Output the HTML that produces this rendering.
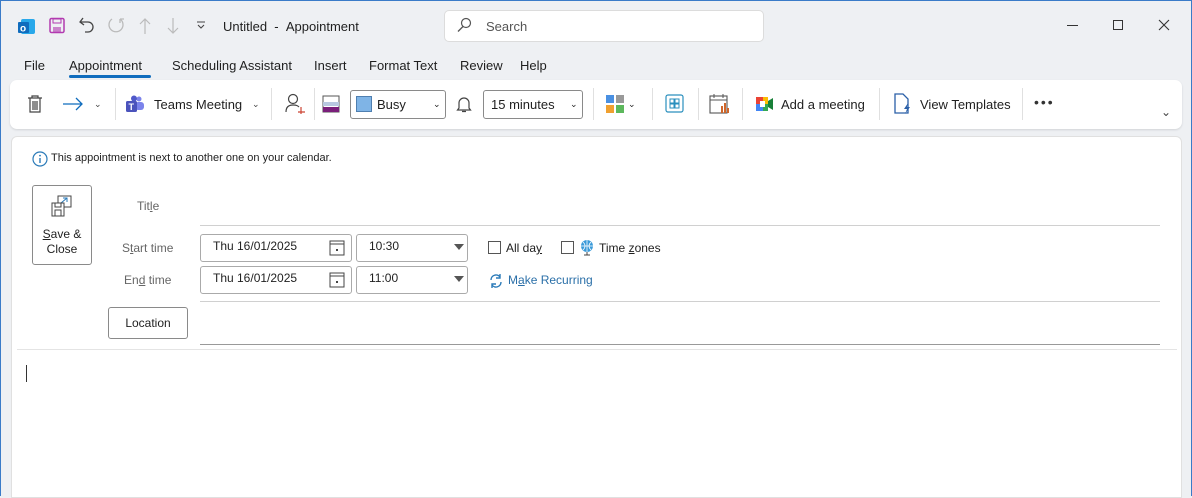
<!DOCTYPE html>
<html><head><style>
*{margin:0;padding:0;box-sizing:border-box}
body{width:1192px;height:496px;background:#eef0f3;font-family:"Liberation Sans",sans-serif;position:relative;overflow:hidden;color:#1f1f1f;border:1px solid #3a7bc8;border-bottom:none}
.a{position:absolute;white-space:nowrap}
.t13{font-size:13px}
.sep{position:absolute;width:1px;height:32px;background:#e0e0e0;top:87px}
.box{position:absolute;border:1px solid #8a8a8a;border-radius:3px;background:#fff;font-size:13px}
.lbl{position:absolute;font-size:12px;color:#666}
.hl{position:absolute;height:1px;background:#d0d0d0}
</style></head><body>
<!-- title bar -->
<svg class="a" style="left:16px;top:16px" width="20" height="20"><rect x="4" y="2" width="14" height="15" rx="2" fill="#28a8ea"/><rect x="1" y="5" width="11" height="11" rx="1" fill="#0f6cbd"/><text x="3" y="14.5" font-size="10" fill="#fff" font-family="Liberation Sans" font-weight="bold">o</text></svg>
<svg class="a" style="left:47px;top:16px" width="20" height="18"><rect x="2" y="1.5" width="14" height="14" rx="1.5" fill="none" stroke="#b23ab0" stroke-width="1.5"/><rect x="5" y="2" width="8" height="4" fill="none" stroke="#b23ab0"/><rect x="5" y="10" width="8" height="5" fill="#b23ab0" opacity=".6"/></svg>
<svg class="a" style="left:77px;top:15px" width="18" height="20"><path d="M5 2L2 6l4 3M2 6h8a5 5 0 010 10H7" fill="none" stroke="#444" stroke-width="1.3"/></svg>
<svg class="a" style="left:106px;top:15px" width="18" height="20"><path d="M13 3a7 7 0 11-8 0M13 3v4M13 3h4" fill="none" stroke="#bbb" stroke-width="1.3"/></svg>
<svg class="a" style="left:137px;top:15px" width="14" height="20"><path d="M7 18V3M2 8l5-5 5 5" fill="none" stroke="#bbb" stroke-width="1.2"/></svg>
<svg class="a" style="left:165px;top:15px" width="14" height="20"><path d="M7 2v15M2 12l5 5 5-5" fill="none" stroke="#bbb" stroke-width="1.2"/></svg>
<svg class="a" style="left:195px;top:19px" width="10" height="10"><path d="M1 2h8M2 5l3 3 3-3" fill="none" stroke="#444" stroke-width="1.1"/></svg>
<div class="a t13" style="left:222px;top:18px">Untitled&nbsp; - &nbsp;Appointment</div>
<div class="a" style="left:443px;top:9px;width:320px;height:32px;background:#fff;border:1px solid #dcdcdc;border-radius:5px"></div>
<svg class="a" style="left:455px;top:16px" width="16" height="16"><circle cx="10" cy="6" r="4.5" fill="none" stroke="#555" stroke-width="1.2"/><line x1="7" y1="9.5" x2="2" y2="14.5" stroke="#555" stroke-width="1.3"/></svg>
<div class="a t13" style="left:485px;top:18px;color:#555">Search</div>
<div class="a" style="left:1066px;top:24px;width:11px;height:1px;background:#333"></div>
<div class="a" style="left:1112px;top:19px;width:10px;height:10px;border:1px solid #333"></div>
<svg class="a" style="left:1157px;top:18px" width="12" height="12"><path d="M1 1l10 10M11 1L1 11" stroke="#333" stroke-width="1.1"/></svg>
<!-- tabs -->
<div class="a t13" style="left:23px;top:57px">File</div>
<div class="a t13" style="left:68px;top:57px">Appointment</div>
<div class="a" style="left:68px;top:74px;width:82px;height:3px;background:#0f6cbd;border-radius:2px"></div>
<div class="a t13" style="left:171px;top:57px">Scheduling Assistant</div>
<div class="a t13" style="left:313px;top:57px">Insert</div>
<div class="a t13" style="left:368px;top:57px">Format Text</div>
<div class="a t13" style="left:459px;top:57px">Review</div>
<div class="a t13" style="left:519px;top:57px">Help</div>
<!-- ribbon -->
<div class="a" style="left:9px;top:79px;width:1172px;height:49px;background:#fff;border-radius:7px;box-shadow:0 1px 2px rgba(0,0,0,.12)"></div>
<svg class="a" style="left:25px;top:93px" width="18" height="20"><path d="M2 4h14M6 4V2h6v2M4 4v14h10V4M7 7v9M9 7v9M11 7v9" fill="none" stroke="#444" stroke-width="1.2"/></svg>
<svg class="a" style="left:61px;top:96px" width="22" height="14"><path d="M1 7h19M14 1l6 6-6 6" fill="none" stroke="#0f6cbd" stroke-width="1.3"/></svg>
<div class="a" style="left:93px;top:98px;font-size:9px;color:#444">⌄</div>
<div class="sep" style="left:114px"></div>
<svg class="a" style="left:124px;top:94px" width="20" height="18"><circle cx="14" cy="4" r="2.5" fill="#7b83eb"/><rect x="10" y="7" width="9" height="8" rx="3" fill="#7b83eb"/><circle cx="9" cy="3.5" r="3" fill="#5059c9"/><rect x="1" y="6" width="11" height="11" rx="1.5" fill="#4b53bc"/><text x="3.5" y="15" font-size="9" fill="#fff" font-weight="bold">T</text></svg>
<div class="a t13" style="left:153px;top:96px">Teams Meeting</div>
<div class="a" style="left:251px;top:98px;font-size:9px;color:#444">⌄</div>
<div class="sep" style="left:270px"></div>
<svg class="a" style="left:283px;top:92px" width="22" height="22"><circle cx="9" cy="6" r="4.5" fill="none" stroke="#444" stroke-width="1.2"/><path d="M2 19c0-5 3-7 7-7s5 1 6 2" fill="none" stroke="#444" stroke-width="1.2"/><path d="M17 14v7M14 19h7" stroke="#c43" stroke-width="1.2"/></svg>
<div class="sep" style="left:313px"></div>
<svg class="a" style="left:321px;top:94px" width="18" height="20"><rect x="1" y="1" width="16" height="16" fill="#fff" stroke="#555"/><rect x="1" y="7" width="16" height="4" fill="#b8c8e0"/><rect x="1" y="12" width="16" height="5" fill="#7a1f7a"/></svg>
<div class="box" style="left:349px;top:89px;width:96px;height:29px"></div>
<div class="a" style="left:355px;top:95px;width:16px;height:16px;background:#7fb4e6;border:1px solid #4f7fb0"></div>
<div class="a t13" style="left:376px;top:96px">Busy</div>
<div class="a" style="left:432px;top:98px;font-size:9px">⌄</div>
<svg class="a" style="left:455px;top:94px" width="16" height="18"><path d="M3 13V8a5 5 0 0110 0v5l1.5 2h-13z M6 16.5h4" fill="none" stroke="#444" stroke-width="1.2"/></svg>
<div class="box" style="left:482px;top:89px;width:100px;height:29px"></div>
<div class="a t13" style="left:490px;top:96px">15 minutes</div>
<div class="a" style="left:569px;top:98px;font-size:9px">⌄</div>
<div class="sep" style="left:592px"></div>
<svg class="a" style="left:605px;top:94px" width="22" height="20"><rect x="0" y="0" width="8" height="8" fill="#4a90e2"/><rect x="10" y="0" width="8" height="8" fill="#999"/><rect x="0" y="10" width="8" height="8" fill="#f0a030"/><rect x="10" y="10" width="8" height="8" fill="#5cb85c"/></svg>
<div class="a" style="left:627px;top:98px;font-size:9px">⌄</div>
<div class="sep" style="left:651px"></div>
<svg class="a" style="left:664px;top:93px" width="20" height="20"><rect x="1" y="1" width="17" height="17" rx="2" fill="none" stroke="#2a8fbd" stroke-width="1.2"/><rect x="5" y="5" width="4" height="4" fill="none" stroke="#2a8fbd"/><rect x="10" y="5" width="4" height="4" fill="none" stroke="#2a8fbd"/><rect x="5" y="10" width="4" height="4" fill="none" stroke="#2a8fbd"/><rect x="10" y="10" width="4" height="4" fill="none" stroke="#2a8fbd"/></svg>
<div class="sep" style="left:697px"></div>
<svg class="a" style="left:708px;top:92px" width="22" height="22"><rect x="1" y="3" width="17" height="17" fill="none" stroke="#555" stroke-width="1.1"/><line x1="1" y1="7" x2="18" y2="7" stroke="#555"/><path d="M5 1v4M14 1v4" stroke="#555"/><rect x="12" y="13" width="2" height="7" fill="#d0662a"/><rect x="15" y="10" width="2" height="10" fill="#d0662a"/><rect x="18" y="15" width="2" height="5" fill="#d0662a"/></svg>
<div class="sep" style="left:741px"></div>
<svg class="a" style="left:753px;top:94px" width="20" height="18"><path d="M2 2h12v14H2z" fill="#fbbc04"/><path d="M2 2h7v7H2z" fill="#ea4335"/><path d="M2 9h7v7H2z" fill="#4285f4"/><path d="M9 9h5v7H9z" fill="#34a853"/><path d="M14 6l5-3v12l-5-3z" fill="#188038"/><rect x="6" y="6" width="5" height="6" fill="#fff"/></svg>
<div class="a t13" style="left:780px;top:96px">Add a meeting</div>
<div class="sep" style="left:878px"></div>
<svg class="a" style="left:892px;top:92px" width="20" height="22"><path d="M2 1h8l5 5v14H2z" fill="none" stroke="#2a5fa8" stroke-width="1.3"/><path d="M15 10l-4 6h3l-2 5 5-7h-3z" fill="#2a5fa8"/></svg>
<div class="a t13" style="left:919px;top:96px">View Templates</div>
<div class="sep" style="left:1021px"></div>
<div class="a" style="left:1033px;top:93px;font-size:14px;letter-spacing:2px;color:#333">•••</div>
<div class="a" style="left:1160px;top:104px;font-size:12px;color:#444">⌄</div>
<!-- body -->
<div class="a" style="left:10px;top:135px;width:1171px;height:362px;background:#fff;border:1px solid #e0e0e0;border-radius:6px 6px 0 0"></div>
<svg class="a" style="left:31px;top:150px" width="16" height="16"><circle cx="8" cy="8" r="7" fill="none" stroke="#2a7ab8" stroke-width="1.2"/><rect x="7.3" y="7" width="1.4" height="5" fill="#2a7ab8"/><circle cx="8" cy="4.6" r=".9" fill="#2a7ab8"/></svg>
<div class="a" style="left:50px;top:151px;font-size:11px">This appointment is next to another one on your calendar.</div>
<div class="a" style="left:31px;top:184px;width:60px;height:80px;border:1px solid #8a8a8a;border-radius:3px"></div>
<svg class="a" style="left:49px;top:193px" width="24" height="24"><rect x="8" y="2" width="13" height="11" fill="none" stroke="#444"/><path d="M11 9l6-5M13 4h4v4" fill="none" stroke="#2a7ab8"/><rect x="2" y="9" width="12" height="13" fill="#fff" stroke="#444"/><rect x="5" y="16" width="6" height="6" fill="none" stroke="#444"/><rect x="5" y="9" width="6" height="4" fill="none" stroke="#444"/></svg>
<div class="a" style="left:31px;top:226px;width:60px;text-align:center;font-size:12px;line-height:15px"><u>S</u>ave &amp;<br>Close</div>
<div class="lbl" style="left:136px;top:198px">Tit<u>l</u>e</div>
<div class="hl" style="left:199px;top:224px;width:960px"></div>
<div class="lbl" style="left:121px;top:240px">S<u>t</u>art time</div>
<div class="lbl" style="left:123px;top:272px">En<u>d</u> time</div>
<div class="box" style="left:199px;top:233px;width:152px;height:28px;border-color:#aaa"></div>
<div class="box" style="left:199px;top:265px;width:152px;height:28px;border-color:#aaa"></div>
<div class="a" style="left:212px;top:238px;font-size:12px">Thu 16/01/2025</div>
<div class="a" style="left:212px;top:270px;font-size:12px">Thu 16/01/2025</div>
<svg class="a" style="left:328px;top:238px" width="16" height="18"><rect x="1" y="2" width="14" height="14" fill="none" stroke="#444"/><line x1="1" y1="5" x2="15" y2="5" stroke="#444"/><rect x="7" y="10" width="2" height="2" fill="#444"/></svg>
<svg class="a" style="left:328px;top:270px" width="16" height="18"><rect x="1" y="2" width="14" height="14" fill="none" stroke="#444"/><line x1="1" y1="5" x2="15" y2="5" stroke="#444"/><rect x="7" y="10" width="2" height="2" fill="#444"/></svg>
<div class="box" style="left:355px;top:233px;width:112px;height:28px;border-color:#aaa"></div>
<div class="box" style="left:355px;top:265px;width:112px;height:28px;border-color:#aaa"></div>
<div class="a" style="left:368px;top:238px;font-size:12px">10:30</div>
<div class="a" style="left:368px;top:270px;font-size:12px">11:00</div>
<div class="a" style="left:453px;top:243px;width:0;height:0;border:5px solid transparent;border-top:6px solid #555"></div>
<div class="a" style="left:453px;top:275px;width:0;height:0;border:5px solid transparent;border-top:6px solid #555"></div>
<div class="a" style="left:487px;top:240px;width:13px;height:13px;border:1px solid #555"></div>
<div class="a" style="left:505px;top:240px;font-size:12px">All da<u>y</u></div>
<div class="a" style="left:560px;top:240px;width:13px;height:13px;border:1px solid #555"></div>
<svg class="a" style="left:578px;top:238px" width="16" height="18"><circle cx="8" cy="7" r="6" fill="#3a9ad9"/><path d="M2 7h12M8 1v12M4 3q4 4 0 8M12 3q-4 4 0 8" stroke="#fff" fill="none" stroke-width=".8"/><path d="M8 13v3M5 16h6" stroke="#444"/></svg>
<div class="a" style="left:598px;top:240px;font-size:12px">Time <u>z</u>ones</div>
<svg class="a" style="left:487px;top:272px" width="16" height="16"><path d="M3 7a5 5 0 019-3M13 9a5 5 0 01-9 3" fill="none" stroke="#2a7ab8" stroke-width="1.4"/><path d="M12 1v4h-4M4 15v-4h4" fill="none" stroke="#2a7ab8" stroke-width="1.4"/></svg>
<div class="a" style="left:507px;top:272px;font-size:12px;color:#2a6fa8">M<u>a</u>ke Recurring</div>
<div class="hl" style="left:199px;top:300px;width:960px"></div>
<div class="a" style="left:107px;top:306px;width:80px;height:32px;border:1px solid #8a8a8a;border-radius:3px;font-size:12px;text-align:center;line-height:30px">Location</div>
<div class="hl" style="left:199px;top:343px;width:960px;background:#999"></div>
<div class="hl" style="left:16px;top:348px;width:1160px;background:#e4e4e4"></div>
<div class="a" style="left:25px;top:364px;width:1px;height:17px;background:#333"></div>
</body></html>
